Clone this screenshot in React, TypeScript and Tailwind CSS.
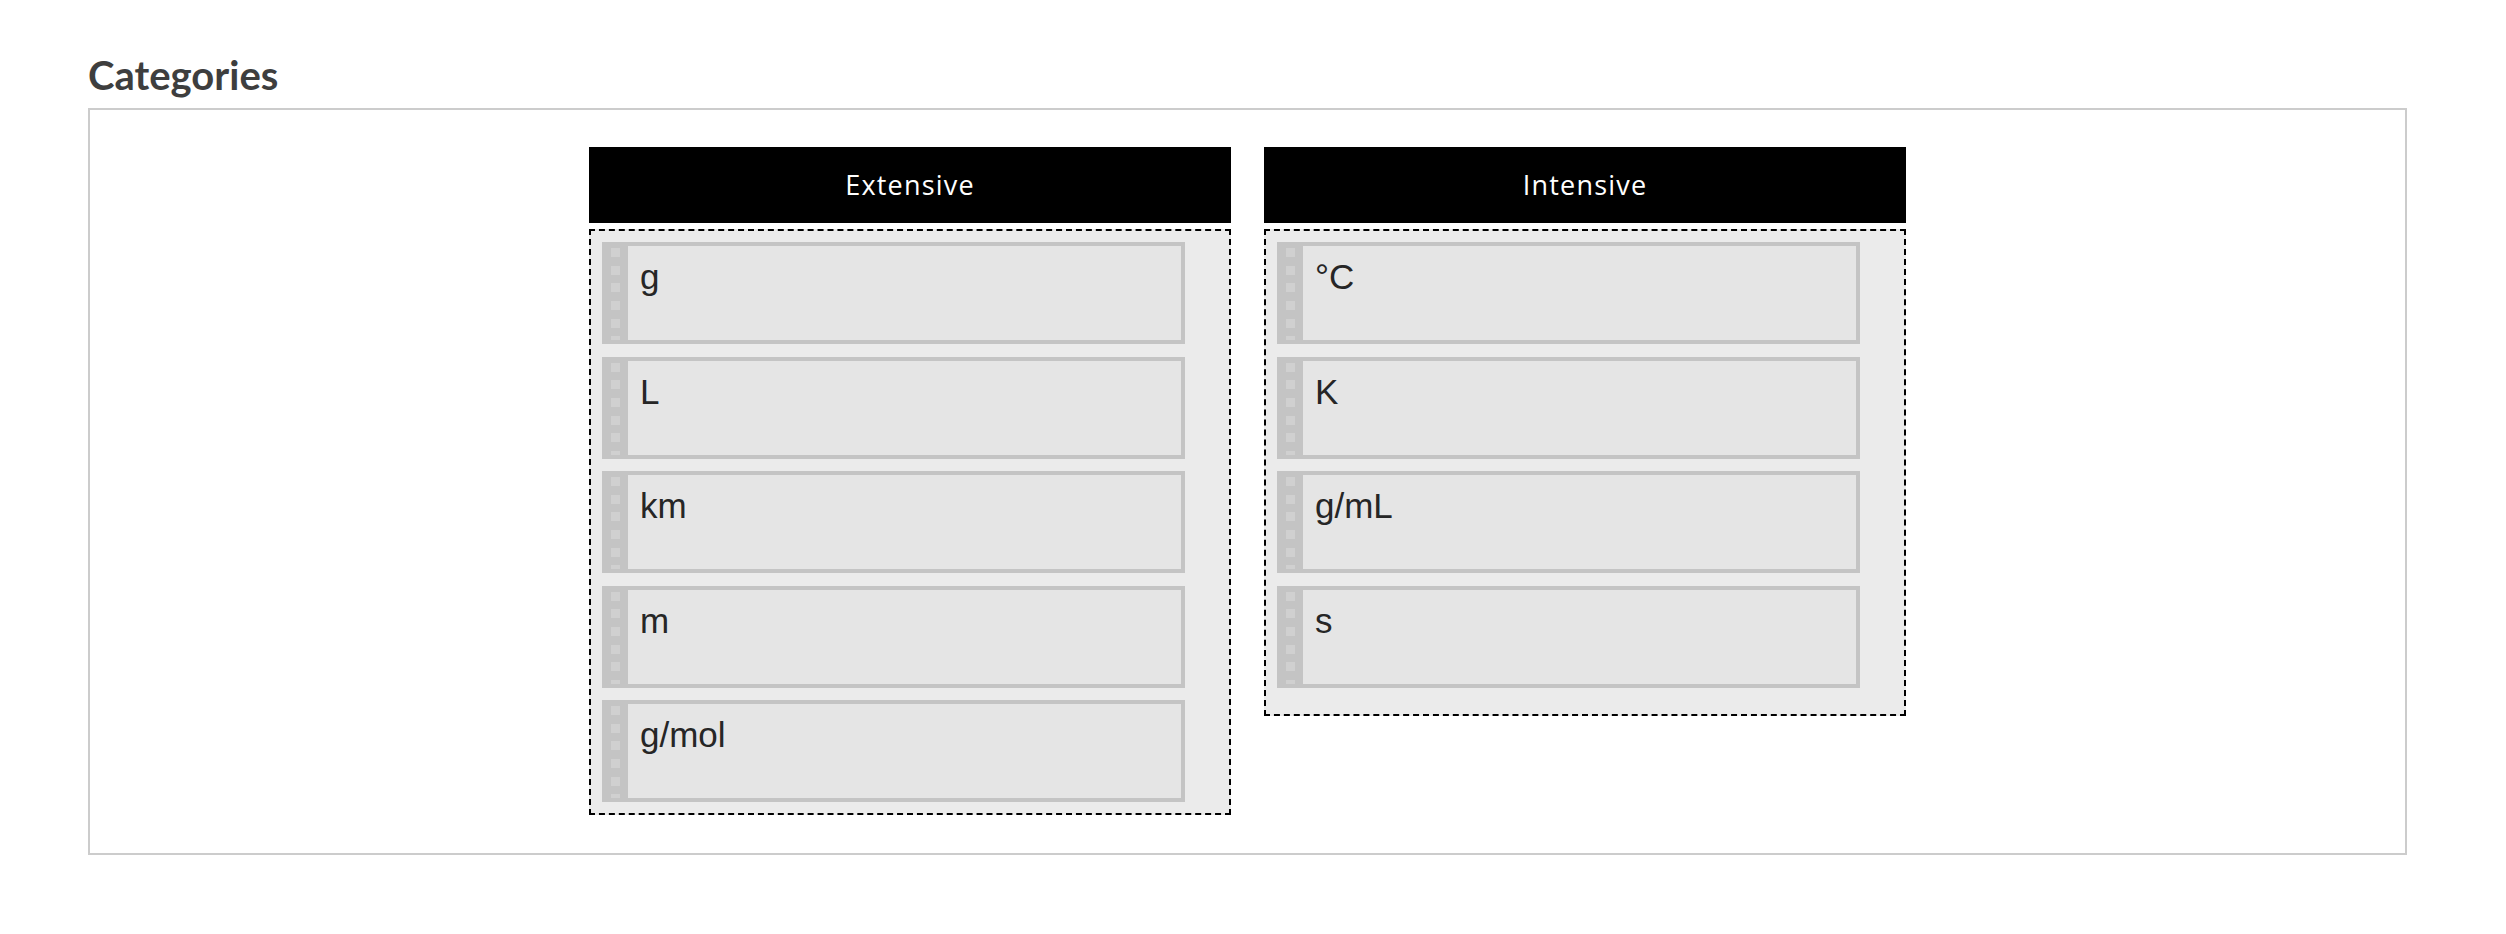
import React from "react";

type Col = { title: string; items: string[]; pb: string };

const cols: Col[] = [
  { title: "Extensive", items: ["g", "L", "km", "m", "g/mol"], pb: "pb-[11px]" },
  { title: "Intensive", items: ["°C", "K", "g/mL", "s"], pb: "pb-[26px]" },
];

function Card({ label }: { label: string }) {
  return (
    <div className="flex h-[102px] w-[583px] border-4 border-[#c4c4c4] bg-[#e5e5e5]">
      <div className="flex h-full w-[22px] shrink-0 flex-col gap-[8.7px] overflow-hidden bg-[#c4c4c4] pl-[5px] pt-[2px]">
        {[0, 1, 2, 3, 4, 5].map((i) => (
          <div key={i} className="h-[9px] w-[9px] shrink-0 bg-[#d0d0d0]" />
        ))}
      </div>
      <div
        className="pl-[12px] pt-[14px] text-[35px] leading-[34px] text-[#262626]"
        style={{ fontFamily: '"Liberation Sans", Arial, sans-serif' }}
      >
        {label}
      </div>
    </div>
  );
}

export default function App() {
  return (
    <div className="min-h-[934px] w-[2506px] bg-white pt-[52px]">
      <h2
        className="ml-[88px] mb-[10px] text-[40px] font-bold leading-[46px] text-[#3e3e3e]"
        style={{ fontFamily: 'Lato, "Open Sans", sans-serif' }}
      >
        Categories
      </h2>
      <div className="ml-[88px] flex h-[747px] w-[2319px] items-start justify-center gap-[33px] border-2 border-[#cccccc] pt-[37px]">
        {cols.map((c) => (
          <div key={c.title} className="flex w-[642px] flex-col">
            <div
              className="flex h-[76px] items-center justify-center bg-black text-[27px] tracking-[1.2px] text-white"
              style={{ fontFamily: '"Open Sans", "Noto Sans", sans-serif' }}
            >
              {c.title}
            </div>
            <div
              className={`mt-[6px] flex flex-col gap-[12.5px] border-2 border-dashed border-black bg-[#ebebeb] pl-[11px] pt-[11px] ${c.pb}`}
            >
              {c.items.map((it) => (
                <Card key={it} label={it} />
              ))}
            </div>
          </div>
        ))}
      </div>
    </div>
  );
}
